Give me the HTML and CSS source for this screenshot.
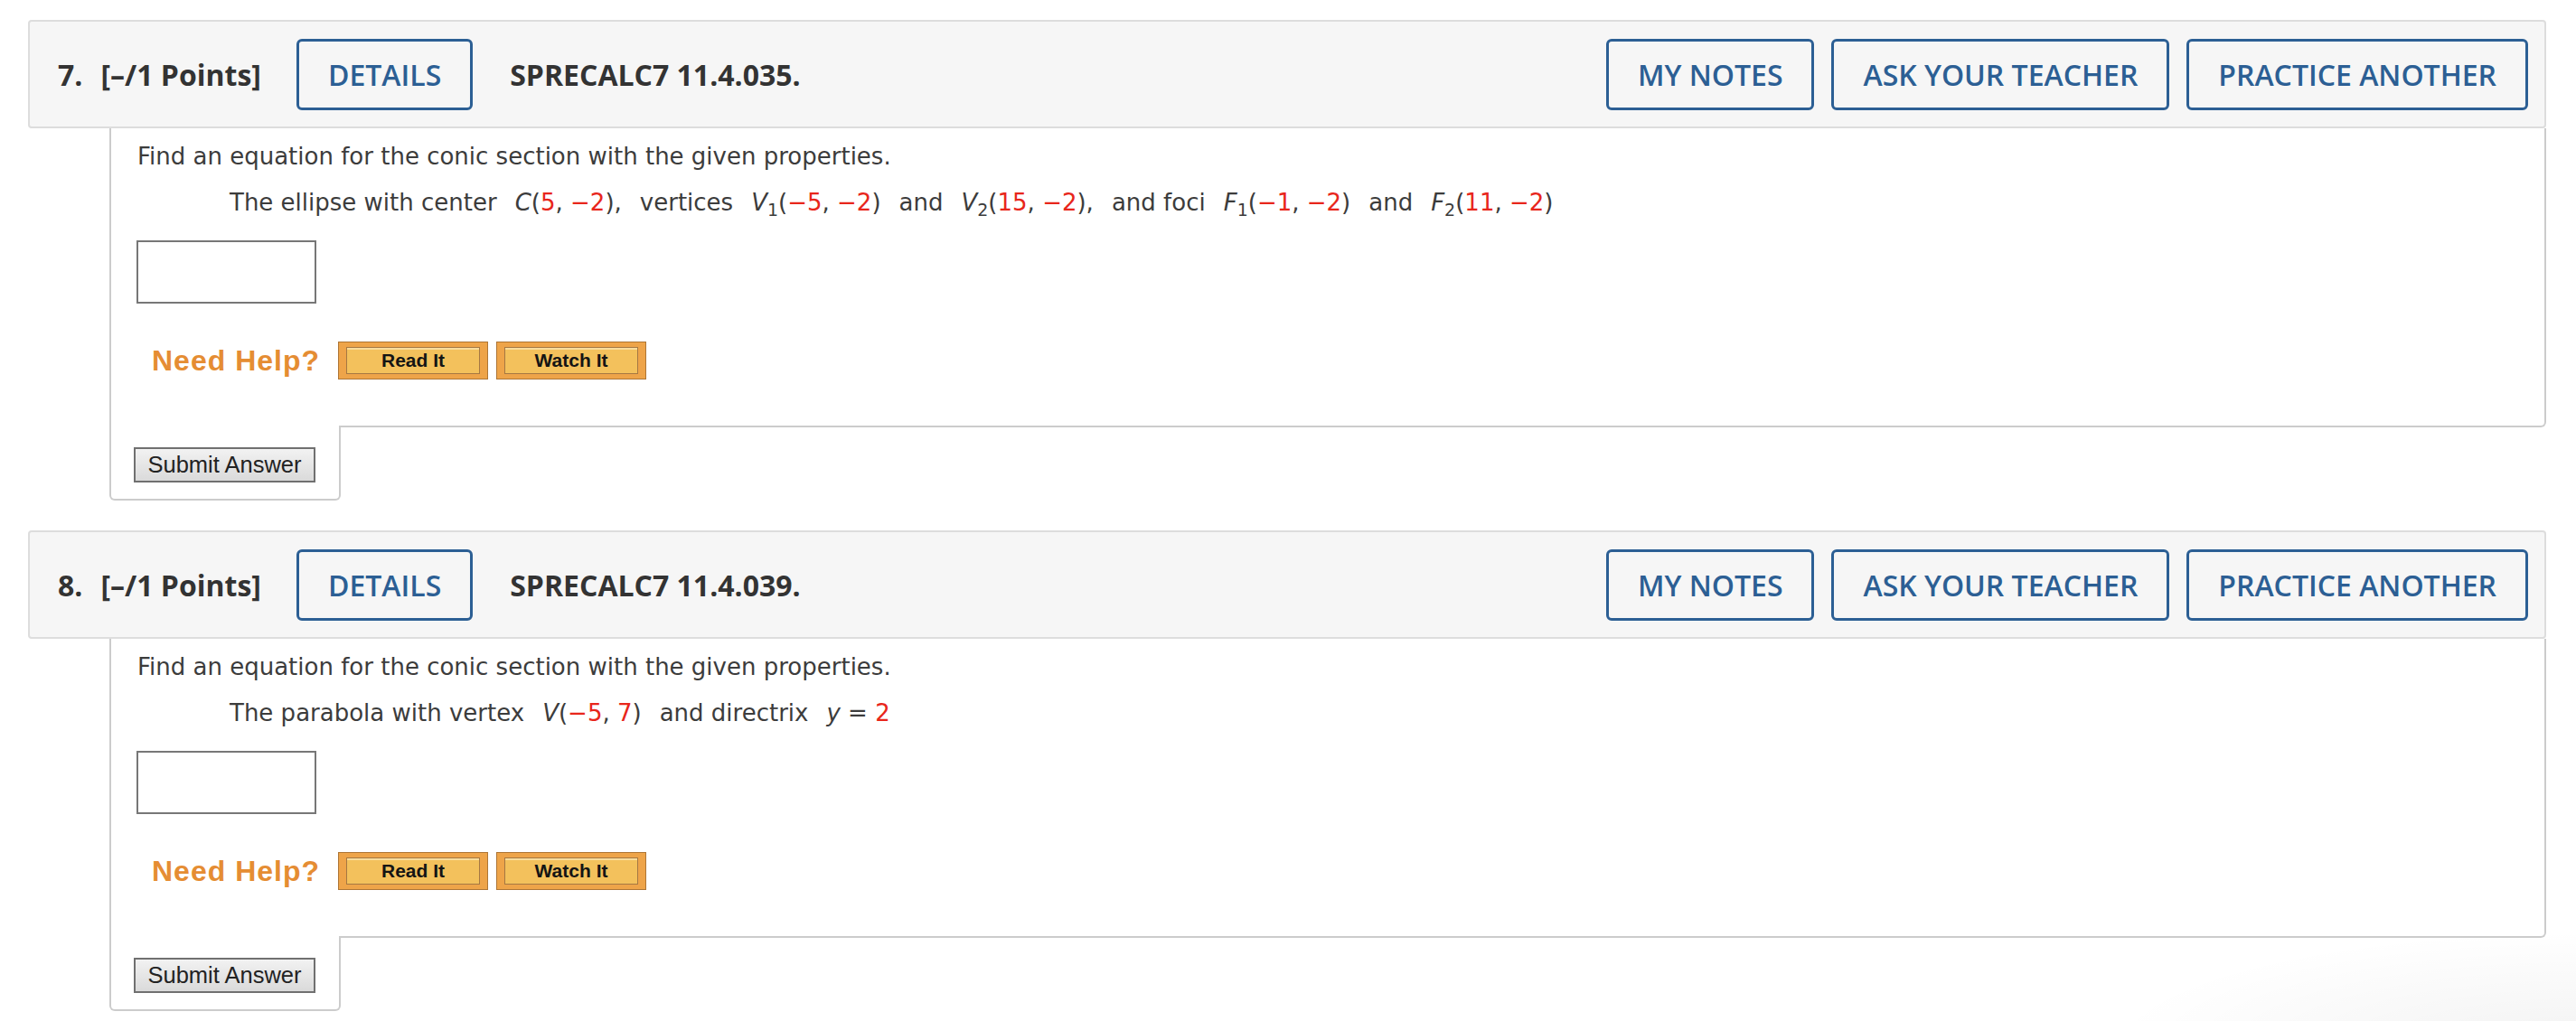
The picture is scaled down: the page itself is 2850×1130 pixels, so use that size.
FILE: index.html
```html
<!DOCTYPE html>
<html lang="en">
<head>
<meta charset="utf-8">
<title>Questions</title>
<link rel="stylesheet" href="styles.css">
</head>
<body>
<div class="page">

  <section class="question">
    <div class="q-header">
      <span class="q-num">7.</span>
      <span class="q-points">[–/1 Points]</span>
      <button class="hbtn">DETAILS</button>
      <span class="q-code">SPRECALC7 11.4.035.</span>
      <div class="spacer"></div>
      <div class="hbtn-group">
        <button class="hbtn">MY NOTES</button>
        <button class="hbtn">ASK YOUR TEACHER</button>
        <button class="hbtn">PRACTICE ANOTHER</button>
      </div>
    </div>
    <div class="q-body">
      <p class="prompt">Find an equation for the conic section with the given properties.</p>
      <p class="given">The ellipse with center<span class="m"><i>C</i>(<b class="r">5</b>, <b class="r">−2</b>),</span>vertices<span class="m"><i>V</i><sub>1</sub>(<b class="r">−5</b>, <b class="r">−2</b>)</span>and<span class="m"><i>V</i><sub>2</sub>(<b class="r">15</b>, <b class="r">−2</b>),</span>and foci<span class="m"><i>F</i><sub>1</sub>(<b class="r">−1</b>, <b class="r">−2</b>)</span>and<span class="m"><i>F</i><sub>2</sub>(<b class="r">11</b>, <b class="r">−2</b>)</span></p>
      <div class="answer-box"></div>
      <div class="help-row">
        <span class="need-help">Need Help?</span>
        <span class="help-btn"><span class="help-inner">Read It</span></span>
        <span class="help-btn"><span class="help-inner">Watch It</span></span>
      </div>
    </div>
    <div class="submit-tab">
      <button class="submit">Submit Answer</button>
    </div>
  </section>

  <section class="question">
    <div class="q-header">
      <span class="q-num">8.</span>
      <span class="q-points">[–/1 Points]</span>
      <button class="hbtn">DETAILS</button>
      <span class="q-code">SPRECALC7 11.4.039.</span>
      <div class="spacer"></div>
      <div class="hbtn-group">
        <button class="hbtn">MY NOTES</button>
        <button class="hbtn">ASK YOUR TEACHER</button>
        <button class="hbtn">PRACTICE ANOTHER</button>
      </div>
    </div>
    <div class="q-body">
      <p class="prompt">Find an equation for the conic section with the given properties.</p>
      <p class="given">The parabola with vertex<span class="m"><i>V</i>(<b class="r">−5</b>, <b class="r">7</b>)</span>and directrix<span class="m"><i>y</i> = <b class="r">2</b></span></p>
      <div class="answer-box"></div>
      <div class="help-row">
        <span class="need-help">Need Help?</span>
        <span class="help-btn"><span class="help-inner">Read It</span></span>
        <span class="help-btn"><span class="help-inner">Watch It</span></span>
      </div>
    </div>
    <div class="submit-tab">
      <button class="submit">Submit Answer</button>
    </div>
  </section>

</div>
</body>
</html>
```

FILE: styles.css
```css
html, body {
  margin: 0;
  padding: 0;
  background: #ffffff;
}

body {
  width: 2850px;
  height: 1130px;
  overflow: hidden;
  background: radial-gradient(ellipse 520px 130px at 2850px 1160px, rgba(0,0,0,0.05), rgba(0,0,0,0) 100%), #ffffff;
}

.page {
  padding: 22px 33px 0 31px;
}

.question {
  margin-bottom: 33px;
}

/* ---------- header ---------- */
.q-header {
  display: flex;
  align-items: center;
  height: 120px;
  box-sizing: border-box;
  background: #f6f6f6;
  border: 2px solid #dddddd;
  border-radius: 4px;
  padding: 0 18px 0 31px;
  font-family: "Open Sans", "Liberation Sans", sans-serif;
  color: #333333;
}

.q-num,
.q-points,
.q-code {
  font-size: 32px;
  font-weight: 700;
  white-space: nowrap;
}

.q-num {
  margin-right: 20px;
}

.q-points {
  margin-right: 39px;
}

.q-code {
  margin-left: 41px;
}

.spacer {
  flex: 1;
}

.hbtn-group {
  display: flex;
  gap: 19px;
}

.hbtn {
  height: 79px;
  box-sizing: border-box;
  padding: 0 32px;
  border: 3px solid #2c5f94;
  border-radius: 6px;
  background: transparent;
  color: #2c5f94;
  font-family: "Open Sans", "Liberation Sans", sans-serif;
  font-size: 32px;
  font-weight: 600;
  white-space: nowrap;
  cursor: pointer;
}

/* ---------- body ---------- */
.q-body {
  margin-left: 90px;
  border: 2px solid #cccccc;
  border-top: none;
  border-radius: 0 0 6px 0;
  padding: 16px 29px 51px 29px;
  font-family: "DejaVu Sans", Verdana, sans-serif;
  font-size: 26px;
  color: #3c3c3c;
}

.prompt,
.given {
  margin: 0;
  line-height: 30px;
  white-space: nowrap;
}

.given {
  margin-top: 21px;
  padding-left: 102px;
}

.m {
  margin: 0 20px;
}

.m i {
  font-style: italic;
}

.m sub {
  font-size: 19px;
  line-height: 0;
  vertical-align: -6px;
}

.r {
  color: #e8261b;
  font-weight: normal;
}

.answer-box {
  width: 199px;
  height: 70px;
  box-sizing: border-box;
  border: 2px solid #777777;
  margin: 27px 0 0 -1px;
  background: #ffffff;
}

.help-row {
  display: flex;
  align-items: center;
  margin-top: 42px;
  margin-left: 16px;
}

.need-help {
  font-family: "Liberation Sans", Arial, sans-serif;
  font-weight: 700;
  font-size: 32px;
  letter-spacing: 1px;
  color: #e58d33;
  margin-right: 20px;
}

.help-btn {
  display: block;
  width: 166px;
  height: 42px;
  box-sizing: border-box;
  border: 1px solid #ad7535;
  background: #eea449;
  padding: 5px 8px;
  margin-right: 9px;
}

.help-inner {
  display: block;
  height: 30px;
  box-sizing: border-box;
  border: 1px solid #a57843;
  background: #f3c15c;
  box-shadow: inset 0 2px 0 #f9dc9c;
  text-align: center;
  font-family: "Liberation Sans", Arial, sans-serif;
  font-weight: 700;
  font-size: 21px;
  line-height: 28px;
  color: #141414;
}

/* ---------- submit tab ---------- */
.submit-tab {
  position: relative;
  margin-left: 90px;
  margin-top: -2px;
  width: 256px;
  box-sizing: border-box;
  border: 2px solid #cccccc;
  border-top: none;
  border-radius: 0 0 6px 6px;
  background: #ffffff;
  padding: 24px 0 18px 25px;
}

.submit {
  display: block;
  width: 201px;
  height: 39px;
  box-sizing: border-box;
  border: 2px solid #707070;
  background: linear-gradient(#f2f2f2, #dadada);
  font-family: "Liberation Sans", Arial, sans-serif;
  font-size: 25.5px;
  color: #222222;
  padding: 0;
  line-height: 35px;
}
```
